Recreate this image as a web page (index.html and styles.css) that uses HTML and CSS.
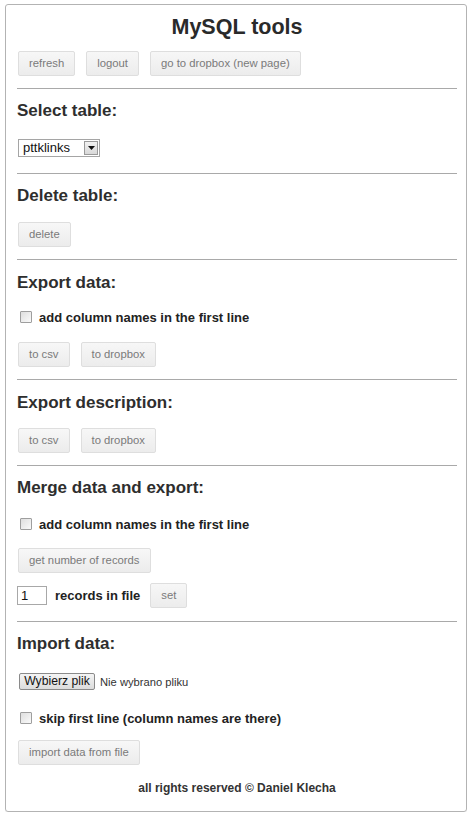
FILE: index.html
```html
<!DOCTYPE html>
<html>
<head>
<meta charset="utf-8">
<title>MySQL tools</title>
<link rel="stylesheet" href="styles.css">
</head>
<body>
<div class="panel">
  <h1 class="title">MySQL tools</h1>
  <div class="btn-row top-row">
    <button class="btn">refresh</button>
    <button class="btn">logout</button>
    <button class="btn">go to dropbox (new page)</button>
  </div>
  <hr class="sep sep-a">

  <h2 class="heading">Select table:</h2>
  <div class="select-row">
    <span class="select">
      <span class="select-text">pttklinks</span>
      <span class="select-arrow"><svg width="7" height="4" viewBox="0 0 7 4"><path d="M0 0H7L3.5 4Z" fill="#111"/></svg></span>
    </span>
  </div>
  <hr class="sep sep-b">

  <h2 class="heading">Delete table:</h2>
  <div class="btn-row mt16">
    <button class="btn">delete</button>
  </div>
  <hr class="sep sep-a">

  <h2 class="heading h-13">Export data:</h2>
  <label class="check-row mt16"><input type="checkbox" class="check"><span>add column names in the first line</span></label>
  <div class="btn-row mt17">
    <button class="btn">to csv</button>
    <button class="btn">to dropbox</button>
  </div>
  <hr class="sep sep-a">

  <h2 class="heading h-13">Export description:</h2>
  <div class="btn-row mt15">
    <button class="btn">to csv</button>
    <button class="btn">to dropbox</button>
  </div>
  <hr class="sep sep-a">

  <h2 class="heading">Merge data and export:</h2>
  <label class="check-row mt18"><input type="checkbox" class="check"><span>add column names in the first line</span></label>
  <div class="btn-row mt16">
    <button class="btn">get number of records</button>
  </div>
  <div class="records-row">
    <input type="text" class="num" value="1">
    <span class="records-label">records in file</span>
    <button class="btn">set</button>
  </div>
  <hr class="sep sep-c">

  <h2 class="heading">Import data:</h2>
  <div class="file-row">
    <span class="file-btn">Wybierz plik</span>
    <span class="file-name">Nie wybrano pliku</span>
  </div>
  <label class="check-row mt20"><input type="checkbox" class="check"><span>skip first line (column names are there)</span></label>
  <div class="btn-row mt14">
    <button class="btn">import data from file</button>
  </div>
  <p class="footer">all rights reserved © Daniel Klecha</p>
</div>
</body>
</html>
```

FILE: styles.css
```css
html, body {
  background: #ffffff;
}
body {
  margin: 4px 7px 10px 5px;
  font-family: "Liberation Sans", Arial, sans-serif;
  color: #333;
}
.panel {
  border: 1px solid #b3b3b3;
  border-radius: 3px;
  padding: 10px 9px 15px 11px;
  box-shadow: 0 1px 1px rgba(0,0,0,0.08);
}
.title {
  margin: 0;
  text-align: center;
  font-size: 21.5px;
  line-height: 24px;
  font-weight: bold;
  color: #2a2a2a;
}
.btn-row {
  display: flex;
  gap: 10px;
}
.top-row {
  margin-top: 12px;
}
.mt14 { margin-top: 14px; }
.mt15 { margin-top: 15px; }
.mt16 { margin-top: 16px; }
.mt17 { margin-top: 17px; }
.mt18 { margin-top: 18px; }
.mt20 { margin-top: 20px; }
.btn {
  height: 25px;
  padding: 0 10px;
  margin: 0 0 0 1px;
  font-family: "Liberation Sans", Arial, sans-serif;
  font-size: 11.3px;
  color: #7a7a7a;
  background: linear-gradient(#f7f7f7, #ececec);
  border: 1px solid #dedede;
  border-radius: 2px;
  line-height: 23px;
}
.sep {
  border: 0;
  border-top: 1px solid #a9a9a9;
  height: 0;
  margin: 12px 0 0 0;
}
.sep-b { margin-top: 16px; }
.sep-c { margin-top: 13px; }
.heading {
  margin: 12px 0 0 0;
  font-size: 17px;
  line-height: 20px;
  font-weight: bold;
  color: #2e2e2e;
}
.h-13 { margin-top: 13px; }
.select-row {
  margin-top: 18px;
  display: flex;
}
.select {
  position: relative;
  display: block;
  width: 80px;
  height: 16px;
  margin-left: 1px;
  border: 1px solid #a5a5a5;
  background: #fff;
}
.select-text {
  display: block;
  padding-left: 4px;
  font-size: 13px;
  line-height: 16px;
  color: #111;
}
.select-arrow {
  position: absolute;
  right: 1px;
  top: 1px;
  width: 12px;
  height: 12px;
  border: 1px solid #9a9a9a;
  background: linear-gradient(#f2f2f2, #d8d8d8);
  display: flex;
  align-items: center;
  justify-content: center;
}
.check-row {
  display: flex;
  align-items: center;
  height: 16px;
  font-size: 13px;
  font-weight: bold;
  color: #222;
}
.check {
  appearance: none;
  -webkit-appearance: none;
  width: 12px;
  height: 12px;
  margin: 0 7px 0 3px;
  border: 1px solid #9e9e9e;
  border-radius: 1px;
  background: linear-gradient(135deg, #dedede, #fafafa);
}
.records-row {
  margin-top: 10px;
  display: flex;
  align-items: center;
}
.num {
  box-sizing: border-box;
  width: 30px;
  height: 19px;
  margin: 0;
  padding: 0 3px;
  border: 1px solid #a8a8a8;
  font-family: "Liberation Sans", Arial, sans-serif;
  font-size: 13px;
  color: #111;
}
.records-label {
  margin: 0 9px 0 8px;
  font-size: 13px;
  font-weight: bold;
  color: #222;
}
.file-row {
  margin-top: 19px;
  display: flex;
  align-items: center;
}
.file-btn {
  display: block;
  box-sizing: border-box;
  height: 17px;
  width: 76px;
  margin-left: 2px;
  border: 1px solid #8a8a8a;
  border-radius: 2px;
  background: linear-gradient(#f4f4f4, #dcdcdc);
  font-size: 12.2px;
  line-height: 15px;
  text-align: center;
  color: #111;
}
.file-name {
  margin-left: 5px;
  font-size: 11.2px;
  color: #333;
}
.footer {
  margin: 15px 0 0 0;
  text-align: center;
  font-size: 12px;
  line-height: 16px;
  font-weight: bold;
  color: #333;
}
```
